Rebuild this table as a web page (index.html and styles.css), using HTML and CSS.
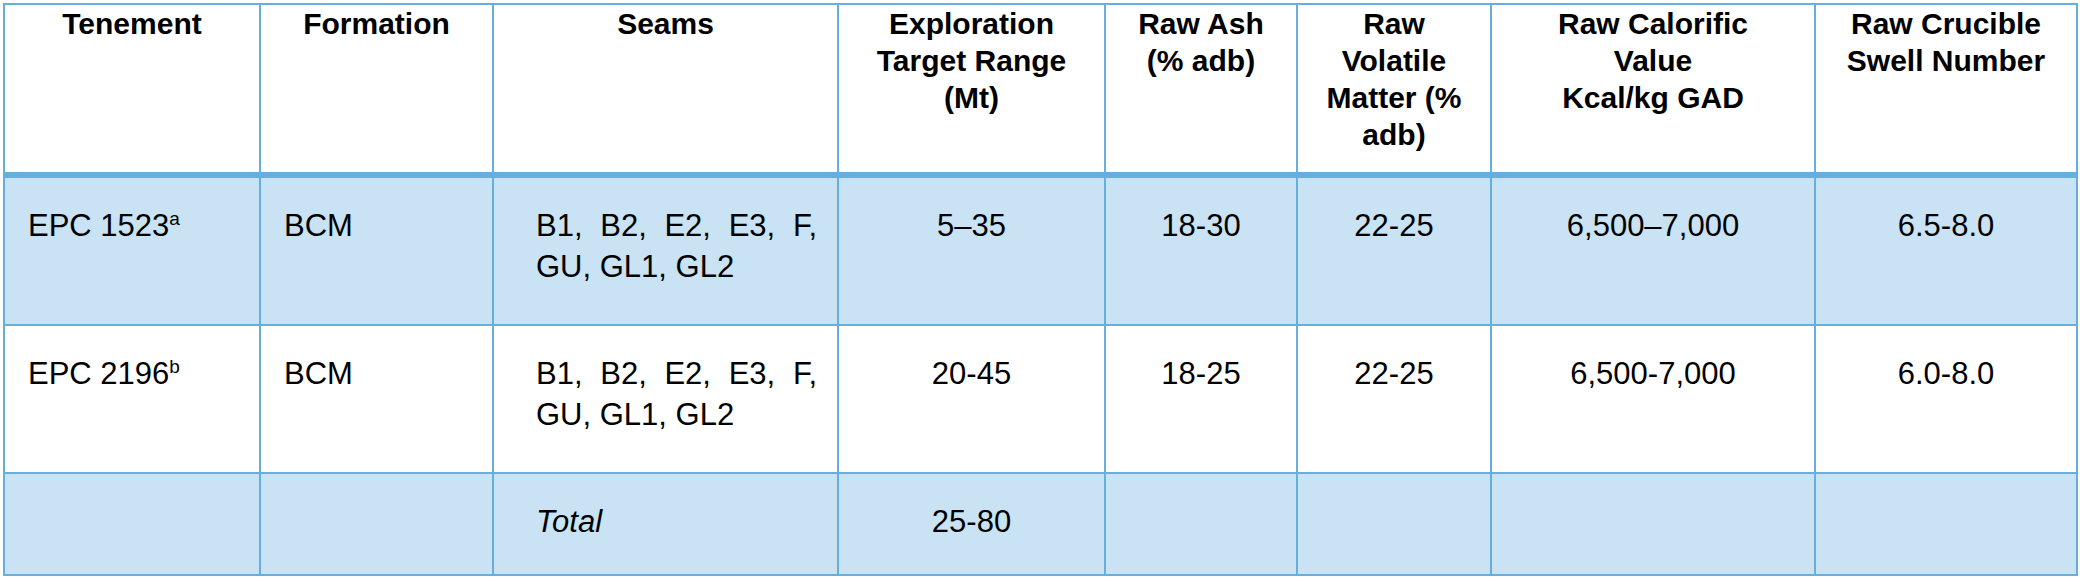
FILE: index.html
```html
<!DOCTYPE html>
<html lang="en">
<head>
<meta charset="utf-8">
<title>Exploration Target</title>
<link rel="stylesheet" href="styles.css">
</head>
<body>
<table class="grid">
  <colgroup>
    <col class="c1"><col class="c2"><col class="c3"><col class="c4">
    <col class="c5"><col class="c6"><col class="c7"><col class="c8">
  </colgroup>
  <thead>
    <tr class="head">
      <th>Tenement</th>
      <th>Formation</th>
      <th>Seams</th>
      <th>Exploration<br>Target Range<br>(Mt)</th>
      <th>Raw Ash<br>(% adb)</th>
      <th>Raw<br>Volatile<br>Matter (%<br>adb)</th>
      <th>Raw Calorific<br>Value<br>Kcal/kg GAD</th>
      <th>Raw Crucible<br>Swell Number</th>
    </tr>
  </thead>
  <tbody>
    <tr class="row shade r1">
      <td>EPC 1523<sup>a</sup></td>
      <td>BCM</td>
      <td class="seams"><span class="jl">B1, B2, E2, E3, F,</span>GU, GL1, GL2</td>
      <td class="num">5–35</td>
      <td class="num">18-30</td>
      <td class="num">22-25</td>
      <td class="num">6,500–7,000</td>
      <td class="num">6.5-8.0</td>
    </tr>
    <tr class="row r2">
      <td>EPC 2196<sup>b</sup></td>
      <td>BCM</td>
      <td class="seams"><span class="jl">B1, B2, E2, E3, F,</span>GU, GL1, GL2</td>
      <td class="num">20-45</td>
      <td class="num">18-25</td>
      <td class="num">22-25</td>
      <td class="num">6,500-7,000</td>
      <td class="num">6.0-8.0</td>
    </tr>
    <tr class="row shade r3">
      <td></td>
      <td></td>
      <td class="seams"><em>Total</em></td>
      <td class="num">25-80</td>
      <td></td>
      <td></td>
      <td></td>
      <td></td>
    </tr>
  </tbody>
</table>
</body>
</html>
```
FILE: styles.css
```css
html, body {
  margin: 0;
  padding: 0;
  background: #ffffff;
}

body {
  font-family: "Liberation Sans", Arial, sans-serif;
  color: #000000;
}

.grid {
  margin: 3px 0 0 3px;
  border-collapse: collapse;
  table-layout: fixed;
  width: 2075px;
}

.c1 { width: 256px; }
.c2 { width: 233px; }
.c3 { width: 345px; }
.c4 { width: 267px; }
.c5 { width: 192px; }
.c6 { width: 194px; }
.c7 { width: 324px; }
.c8 { width: 262px; }

.grid th,
.grid td {
  border: 2px solid #66aedc;
  vertical-align: top;
}

.grid th {
  font-size: 30px;
  font-weight: bold;
  text-align: center;
  line-height: 37px;
  padding: 0 20px;
  border-bottom: 6px solid #66aedc;
}

.head {
  height: 171px;
}

.grid td {
  font-size: 31px;
  line-height: 41px;
  padding: 27px 20px 0 23px;
}

.grid td.seams {
  padding-left: 42px;
}

.shade td {
  background: #c9e3f4;
}

.r1 { height: 150px; }
.r2 { height: 148px; }
.r3 { height: 102px; }

.grid td.num {
  text-align: center;
  padding-left: 20px;
}

.jl {
  display: block;
  text-align: justify;
  text-align-last: justify;
}

sup {
  font-size: 19px;
  line-height: 0;
  vertical-align: 11px;
}

em {
  font-style: italic;
}
```
